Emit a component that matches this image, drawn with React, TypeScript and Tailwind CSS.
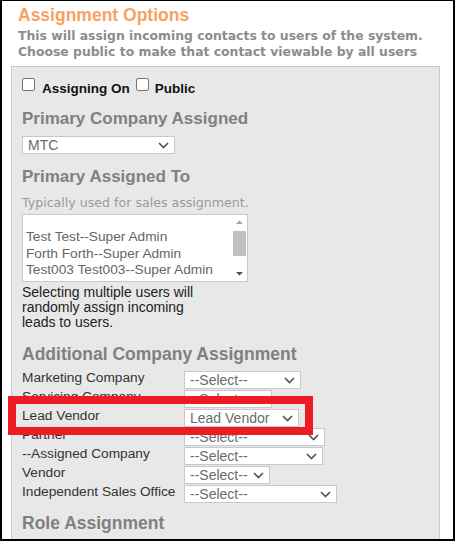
import React from 'react';

// Fake native select: white box, gray border, value text and a chevron
const FakeSelect = ({ value, width }: { value: string; width: string }) => {
    return (
        <div className={`${width} h-[18px] shrink-0 bg-white border border-[#c8c8c8] flex items-center justify-between pl-[5px] pr-[5px] text-[14px] leading-[14px] text-[#6b6b6b] font-['Liberation_Sans',Arial,sans-serif] overflow-hidden whitespace-nowrap`}>
            <span>{value}</span>
            <svg width="11" height="7" viewBox="0 0 11 7" className="shrink-0">
                <path d="M1 1 L5.5 5.5 L10 1" fill="none" stroke="#555" strokeWidth="1.7" />
            </svg>
        </div>
    );
};

const rows: { label: string; value: string; width: string }[] = [
    { label: 'Marketing Company', value: '--Select--', width: 'w-[117px]' },
    { label: 'Servicing Company', value: '--Select--', width: 'w-[88px]' },
    { label: 'Lead Vendor', value: 'Lead Vendor', width: 'w-[115px]' },
    { label: 'Partner', value: '--Select--', width: 'w-[141px]' },
    { label: '--Assigned Company', value: '--Select--', width: 'w-[139px]' },
    { label: 'Vendor', value: '--Select--', width: 'w-[86px]' },
    { label: 'Independent Sales Office', value: '--Select--', width: 'w-[153px]' },
];

const users = ['Test Test--Super Admin', 'Forth Forth--Super Admin', 'Test003 Test003--Super Admin'];

export default function App() {
    return (
        <div className="relative w-[455px] h-[541px] overflow-hidden bg-white border-t border-l-2 border-r-2 border-b-2 border-black font-['Liberation_Sans',Arial,sans-serif]">
            <div className="pl-[16px] pt-[3px]">
                <h1 className="text-[17.5px] leading-[22px] font-bold text-[#f9a15f]">Assignment Options</h1>
                <p className="mt-[2px] text-[12.4px] leading-[16px] font-bold text-[#8c8c8c] font-['DejaVu_Sans',sans-serif]">
                    This will assign incoming contacts to users of the system.
                    <br />
                    Choose public to make that contact viewable by all users
                </p>
            </div>

            <div className="ml-[9px] mt-[6px] w-[429px] h-[520px] border border-[#c9c9c9] bg-[#e8e8e8] pl-[10px] pt-[11px]">
                <div className="flex items-start text-[13.5px] leading-[16px] font-bold text-[#111]">
                    <span className="w-[13px] h-[13px] border border-[#767676] rounded-[2px] bg-white" />
                    <span className="ml-[7px] mt-[3px]">Assigning On</span>
                    <span className="ml-[6px] w-[13px] h-[13px] border border-[#767676] rounded-[2px] bg-white" />
                    <span className="ml-[6px] mt-[3px]">Public</span>
                </div>

                <h2 className="mt-[12px] text-[17px] leading-[20px] font-bold text-[#808080]">Primary Company Assigned</h2>
                <div className="mt-[7px]">
                    <FakeSelect value="MTC" width="w-[153px]" />
                </div>

                <h2 className="mt-[13px] text-[17px] leading-[20px] font-bold text-[#808080]">Primary Assigned To</h2>
                <p className="mt-[8px] text-[12.6px] leading-[16px] text-[#9a9a9a] font-['DejaVu_Sans',sans-serif]">Typically used for sales assignment.</p>

                <div className="mt-[3px] w-[226px] h-[68px] border border-[#c8c8c8] bg-white flex">
                    <div className="flex-1 pl-[3px] pt-[14px] text-[13.7px] leading-[16.5px] text-[#666] whitespace-nowrap overflow-hidden">
                        {users.map((u) => (
                            <div key={u}>{u}</div>
                        ))}
                    </div>
                    <div className="w-[15px] flex flex-col items-center bg-white">
                        <svg width="15" height="15" viewBox="0 0 15 15">
                            <path d="M4 9 L7.5 5.5 L11 9 Z" fill="#a3a3a3" />
                        </svg>
                        <div className="w-[13px] h-[25px] bg-[#c1c1c1] mt-[1px]" />
                        <div className="flex-1" />
                        <svg width="15" height="15" viewBox="0 0 15 15">
                            <path d="M4 6 L11 6 L7.5 9.5 Z" fill="#505050" />
                        </svg>
                    </div>
                </div>

                <p className="mt-[3px] w-[190px] text-[14px] leading-[15px] text-[#222]">
                    Selecting multiple users will randomly assign incoming leads to users.
                </p>

                <h2 className="mt-[14px] text-[17.5px] leading-[20px] font-bold text-[#808080]">Additional Company Assignment</h2>

                <div className="mt-[7px] flex flex-col text-[13.7px] text-[#333]">
                    {rows.map((r) => (
                        <div key={r.label} className="flex items-start h-[19px]">
                            <span className="w-[162px] leading-[14px] whitespace-nowrap">{r.label}</span>
                            <FakeSelect value={r.value} width={r.width} />
                        </div>
                    ))}
                </div>

                <h2 className="mt-[9px] text-[17.5px] leading-[20px] font-bold text-[#808080]">Role Assignment</h2>
            </div>

            {/* red highlight drawn over the Lead Vendor row */}
            <div className="absolute left-[6px] top-[395px] w-[305px] h-[39px] border-[8px] border-[#ed1c24]" />
        </div>
    );
}
